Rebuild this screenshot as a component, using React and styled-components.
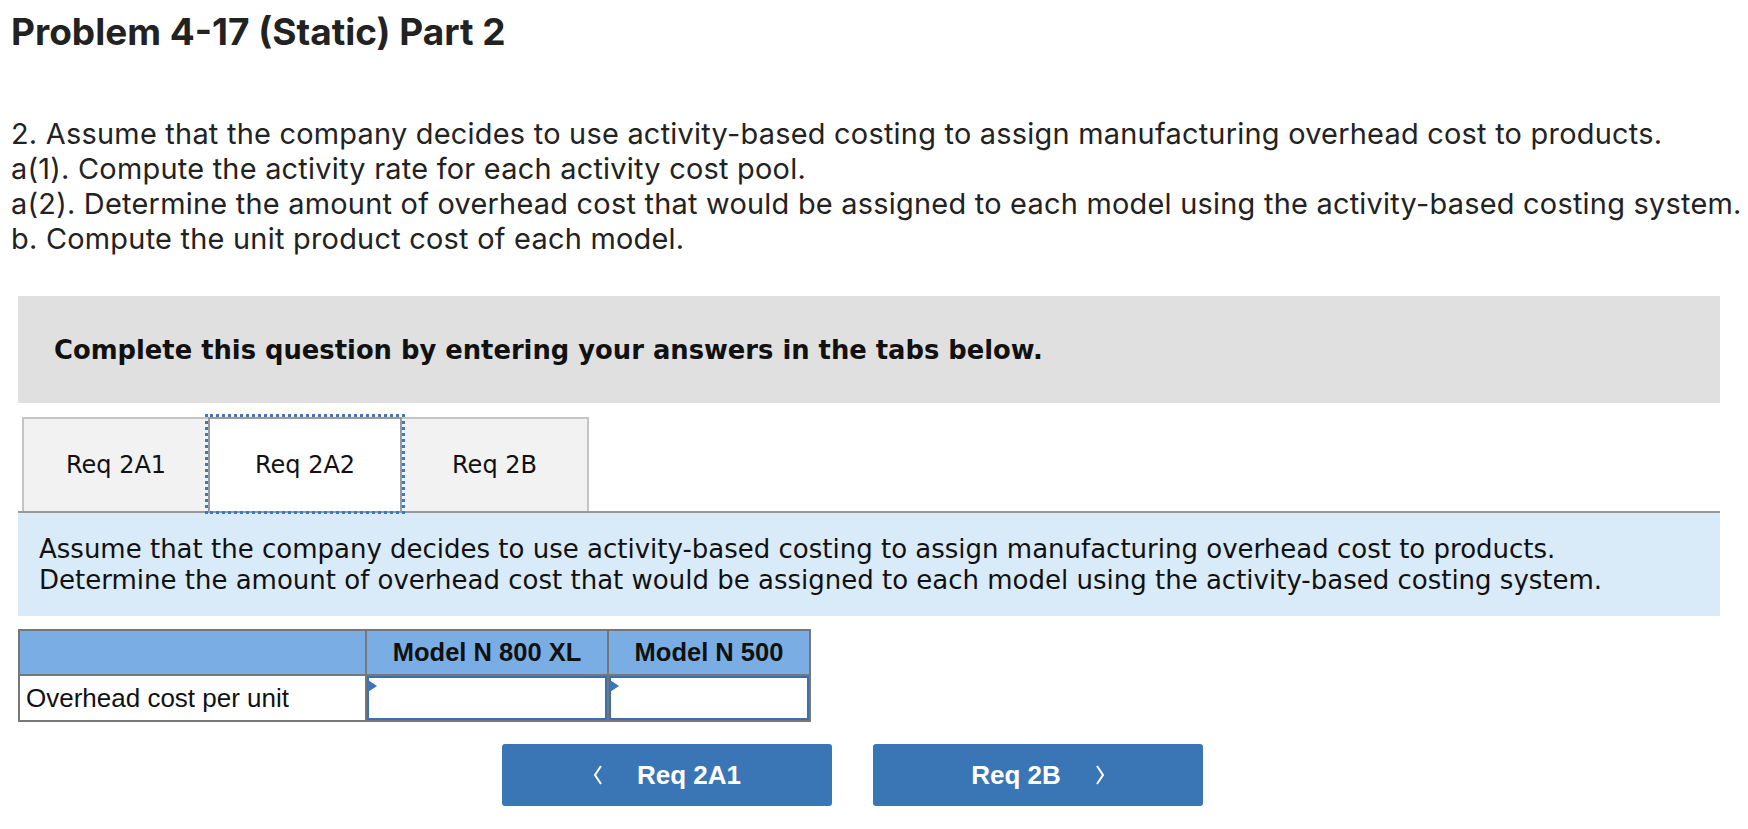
import React from "react";
import styled, { createGlobalStyle } from "styled-components";

const GlobalStyle = createGlobalStyle`
  body {
    margin: 0;
    background: #ffffff;
  }
`;

const Page = styled.div`
  width: 1748px;
  padding: 10px 0 0 11px;
  box-sizing: border-box;
`;

const Title = styled.h1`
  margin: 0;
  font-family: Inter, "Open Sans", sans-serif;
  font-weight: 700;
  font-size: 37px;
  line-height: 44px;
  color: #222222;
`;

const Prompt = styled.div`
  margin-top: 62px;
  font-family: Inter, "Open Sans", sans-serif;
  font-size: 28.9px;
  line-height: 35px;
  letter-spacing: 0.25px;
  color: #222222;
`;

const Line = styled.div`
  white-space: nowrap;
`;

const Instruction = styled.div`
  margin: 40px 0 0 7px;
  width: 1702px;
  height: 107px;
  background: #e0e0e0;
  display: flex;
  align-items: center;
  padding-left: 36px;
  box-sizing: border-box;
  font-family: "DejaVu Sans", Verdana, sans-serif;
  font-weight: 700;
  font-size: 25.8px;
  color: #111111;
`;

const TabBar = styled.div`
  display: flex;
  margin: 14px 0 0 11px;
`;

const Tab = styled.div`
  width: ${(p) => p.$w}px;
  height: 94px;
  box-sizing: border-box;
  margin-right: -2px;
  display: flex;
  align-items: center;
  justify-content: center;
  font-family: "DejaVu Sans", Verdana, sans-serif;
  font-size: 24px;
  color: #111111;
  background: ${(p) => (p.$active ? "#ffffff" : "#f2f2f2")};
  border: 2px solid ${(p) => (p.$active ? "#9a9a9a" : "#c4c4c4")};
  border-bottom: none;
  position: relative;
  z-index: ${(p) => (p.$active ? 1 : 0)};
  outline: ${(p) => (p.$active ? "3px dotted #3f78ba" : "none")};
  outline-offset: 0;
`;

const Panel = styled.div`
  margin-left: 7px;
  width: 1702px;
  box-sizing: border-box;
  border-top: 2px solid #999999;
  background: #d9eaf8;
  padding: 21px 21px 20px;
  font-family: "DejaVu Sans", Verdana, sans-serif;
  font-size: 26px;
  line-height: 31px;
  color: #111111;
`;

const Table = styled.table`
  margin: 13px 0 0 7px;
  border-collapse: collapse;
  font-family: "Liberation Sans", Arial, sans-serif;
`;

const HeadCell = styled.th`
  width: ${(p) => p.$w}px;
  height: 43px;
  padding: 0;
  background: #7aade3;
  border: 2px solid #777777;
  font-size: 25.5px;
  font-weight: 700;
  color: #111111;
  text-align: center;
  white-space: nowrap;
`;

const LabelCell = styled.td`
  height: 44px;
  padding: 0 6px;
  border: 2px solid #777777;
  font-size: 26px;
  color: #111111;
  text-align: left;
  white-space: nowrap;
`;

const InputCell = styled.td`
  height: 44px;
  padding: 0;
  border: 2px solid #777777;
`;

const Field = styled.div`
  position: relative;
  height: 44px;
  box-sizing: border-box;
  border: 2px solid #3a6fb1;
  background: #ffffff;

  &::before {
    content: "";
    position: absolute;
    left: -1px;
    top: 2px;
    border-top: 6px solid transparent;
    border-bottom: 6px solid transparent;
    border-left: 9px solid #3a75bd;
  }
`;

const NavRow = styled.div`
  display: flex;
  gap: 41px;
  margin: 22px 0 0 491px;
`;

const NavButton = styled.button`
  width: 330px;
  height: 62px;
  border: none;
  border-radius: 3px;
  background: #3a75b5;
  color: #ffffff;
  display: flex;
  align-items: center;
  justify-content: center;
  gap: 34px;
  font-family: "Liberation Sans", Arial, sans-serif;
  font-weight: 700;
  font-size: 26px;
  cursor: pointer;
`;

const Chevron = ({ dir }) => (
  <svg width="10" height="22" viewBox="0 0 10 22">
    <polyline
      points={dir === "left" ? "8,2 2,11 8,20" : "2,2 8,11 2,20"}
      fill="none"
      stroke="#ffffff"
      strokeWidth="2"
    />
  </svg>
);

const App = () => {
  return (
    <Page>
      <GlobalStyle />
      <Title>Problem 4-17 (Static) Part 2</Title>
      <Prompt>
        <Line>
          2. Assume that the company decides to use activity-based costing to
          assign manufacturing overhead cost to products.
        </Line>
        <Line>a(1). Compute the activity rate for each activity cost pool.</Line>
        <Line>
          a(2). Determine the amount of overhead cost that would be assigned to
          each model using the activity-based costing system.
        </Line>
        <Line>b. Compute the unit product cost of each model.</Line>
      </Prompt>
      <Instruction>
        Complete this question by entering your answers in the tabs below.
      </Instruction>
      <TabBar>
        <Tab $w={188}>Req 2A1</Tab>
        <Tab $w={194} $active>
          Req 2A2
        </Tab>
        <Tab $w={189}>Req 2B</Tab>
      </TabBar>
      <Panel>
        <Line>
          Assume that the company decides to use activity-based costing to
          assign manufacturing overhead cost to products.
        </Line>
        <Line>
          Determine the amount of overhead cost that would be assigned to each
          model using the activity-based costing system.
        </Line>
      </Panel>
      <Table>
        <thead>
          <tr>
            <HeadCell $w={345}></HeadCell>
            <HeadCell $w={240}>Model N 800 XL</HeadCell>
            <HeadCell $w={200}>Model N 500</HeadCell>
          </tr>
        </thead>
        <tbody>
          <tr>
            <LabelCell>Overhead cost per unit</LabelCell>
            <InputCell>
              <Field />
            </InputCell>
            <InputCell>
              <Field />
            </InputCell>
          </tr>
        </tbody>
      </Table>
      <NavRow>
        <NavButton>
          <Chevron dir="left" />
          Req 2A1
        </NavButton>
        <NavButton>
          Req 2B
          <Chevron dir="right" />
        </NavButton>
      </NavRow>
    </Page>
  );
};

export default App;
